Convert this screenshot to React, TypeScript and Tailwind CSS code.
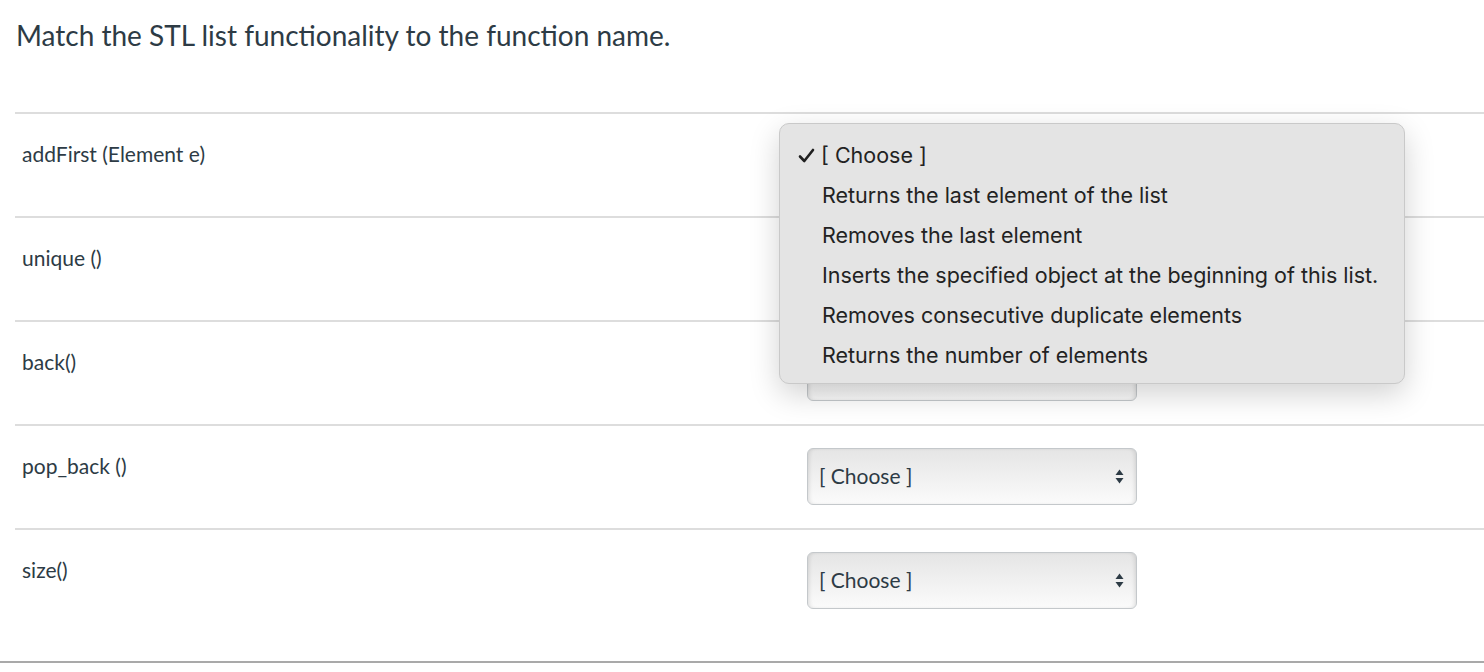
import React from "react";

const rows = ["addFirst (Element e)", "unique ()", "back()", "pop_back ()", "size()"];

const options = [
    "Returns the last element of the list",
    "Removes the last element",
    "Inserts the specified object at the beginning of this list.",
    "Removes consecutive duplicate elements",
    "Returns the number of elements",
];

const Arrows = () => (
    <svg width="9" height="15" viewBox="0 0 9 15" className="text-[#2d3b45]">
        <path d="M4.5 0.5 L8.5 6 L0.5 6 Z" fill="currentColor" />
        <path d="M0.5 9 L8.5 9 L4.5 14.5 Z" fill="currentColor" />
    </svg>
);

const Check = () => (
    <svg width="17" height="15" viewBox="0 0 17 15">
        <path
            d="M2 8.5 L6.3 13 L15 2"
            fill="none"
            stroke="#1f1f1f"
            strokeWidth="2.6"
            strokeLinecap="round"
            strokeLinejoin="round"
        />
    </svg>
);

const Select = () => (
    <div className="w-[330px] h-[57px] flex items-center justify-between pl-[11px] pr-[12px] rounded-[6px] border border-[#c4c8cb] bg-gradient-to-b from-[#e5e5e5] via-[#f0f0f0] to-[#fbfbfb] shadow-[inset_3px_0_4px_-2px_rgba(0,0,0,0.12),inset_-3px_0_4px_-2px_rgba(0,0,0,0.12)]">
        <span className="text-[21px] text-[#2d3b45]">[ Choose ]</span>
        <Arrows />
    </div>
);

const Popup = () => (
    <div className="absolute -left-[28px] -top-[13px] z-10 w-[626px] h-[261px] pt-[12px] rounded-[10px] border border-[#c9c9c9] bg-[#e4e4e4] shadow-[0_10px_30px_rgba(0,0,0,0.18)] font-['Inter',sans-serif] text-[21.5px] text-[#222222]">
        <div className="h-[40px] flex items-center pl-[18px]">
            <Check />
            <span className="ml-[6px]">[ Choose ]</span>
        </div>
        {options.map((o) => (
            <div key={o} className="h-[40px] flex items-center pl-[42px]">
                {o}
            </div>
        ))}
    </div>
);

export default function App() {
    return (
        <div className="min-h-screen bg-white font-['Lato',sans-serif] text-[#2d3b45]">
            <div className="pl-[15px]">
                <h1 className="pt-[19px] pl-px text-[28px] leading-[1.2]">
                    Match the STL list functionality to the function name.
                </h1>

                <div className="mt-[59px]">
                    {rows.map((label, i) => (
                        <div
                            key={label}
                            className="flex border-t-2 border-[#dddddd] pt-[22px] pb-[23px] pl-[7px]"
                        >
                            <div className="w-[785px] mt-[4px] text-[21px] leading-[28px]">{label}</div>
                            <div className="relative">
                                <Select />
                                {i === 0 && <Popup />}
                            </div>
                        </div>
                    ))}
                </div>
            </div>
            <div className="mt-[29px] border-t-2 border-[#a9a9a9]" />
        </div>
    );
}
